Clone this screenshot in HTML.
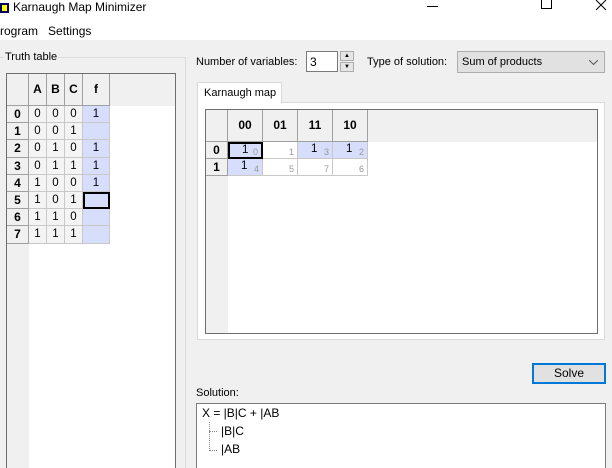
<!DOCTYPE html><html style="width:612px;height:468px;overflow:hidden"><head><style>
*{margin:0;padding:0;box-sizing:border-box}
body{width:612px;height:468px;overflow:hidden;background:#f0f0f0;font-family:"Liberation Sans",sans-serif;font-size:11px;color:#000;position:relative}
.a{position:absolute;white-space:nowrap}
.hc{position:absolute;background:#f0f0f0;border-right:1px solid #a0a0a0;border-bottom:1px solid #a0a0a0;font-weight:bold;text-align:center;font-size:12px}
.c{position:absolute;border-right:1px solid #c8c8c8;border-bottom:1px solid #c8c8c8;text-align:center;font-size:11.5px;background:#f4f4f4}
.f{background:#d6defc}
.w{background:#fff}
.n{position:absolute;right:3px;bottom:1px;font-size:9px;color:#999}
.v{position:absolute;left:13px;top:1px;font-size:11.5px}
</style></head><body>
<div class="a" style="left:0;top:0;width:612px;height:40px;background:#fff"></div>
<div class="a" style="left:0;top:3px;width:9px;height:10px;background:#ff0;border:2px solid #006;"></div>
<div class="a" style="left:13px;top:0;font-size:12px">Karnaugh Map Minimizer</div>
<svg class="a" style="left:420px;top:0" width="192" height="14"><path d="M7 6.5H18" stroke="#000"/><rect x="121.5" y="-1.5" width="10" height="10" fill="none" stroke="#000"/><path d="M176 0L186 10M186 0L176 10" stroke="#000"/></svg>
<div class="a" style="left:0;top:24px;font-size:12px">rogram&nbsp;&nbsp;&nbsp;Settings</div>

<div class="a" style="left:0;top:57px;width:186px;height:411px;border-top:1px solid #dcdcdc;border-right:1px solid #dcdcdc"></div>
<div class="a" style="left:4px;top:51px;background:#f0f0f0;padding:0 1px">Truth table</div>
<div class="a" style="left:6px;top:73px;width:170px;height:395px;border:1px solid #6e6e6e;border-bottom:none;background:#fff"></div>
<div class="a" style="left:7px;top:74px;width:22px;height:394px;background:#f0f0f0"></div>
<div class="a" style="left:29px;top:74px;width:146px;height:32px;background:#f0f0f0"></div>
<div class="hc" style="left:7px;top:74px;width:22px;height:32px"></div>
<div class="hc" style="left:29px;top:74px;width:18px;height:32px;line-height:31px">A</div>
<div class="hc" style="left:47px;top:74px;width:18px;height:32px;line-height:31px">B</div>
<div class="hc" style="left:65px;top:74px;width:18px;height:32px;line-height:31px">C</div>
<div class="hc" style="left:83px;top:74px;width:27px;height:32px;line-height:31px">f</div>
<div id="tt"></div>

<div class="a" style="left:196px;top:56px">Number of variables:</div>
<div class="a" style="left:306px;top:51px;width:32px;height:21px;background:#fff;border:1px solid #7a7a7a;padding:3px 0 0 3px;font-size:12px">3</div>
<div class="a" style="left:340px;top:51px;width:14px;height:10px;border:1px solid #adadad;background:#e5e5e5;font-size:6px;text-align:center;line-height:8px">▲</div>
<div class="a" style="left:340px;top:62px;width:14px;height:10px;border:1px solid #adadad;background:#e5e5e5;font-size:6px;text-align:center;line-height:8px">▼</div>
<div class="a" style="left:367px;top:56px">Type of solution:</div>
<div class="a" style="left:457px;top:51px;width:148px;height:22px;background:#e1e1e1;border:1px solid #adadad;padding:4px 0 0 4px">Sum of products<svg class="a" style="right:6px;top:8px" width="9" height="5"><path d="M0 0L4.5 4.5L9 0" fill="none" stroke="#555"/></svg></div>

<div class="a" style="left:197px;top:102px;width:408px;height:238px;background:#fff;border:1px solid #d9d9d9"></div>
<div class="a" style="left:197px;top:82px;width:85px;height:21px;background:#fff;border:1px solid #d9d9d9;border-bottom:none;padding:4px 0 0 6px">Karnaugh map</div>
<div class="a" style="left:205px;top:109px;width:393px;height:225px;border:1px solid #6e6e6e;background:#fff"></div>
<div class="a" style="left:206px;top:110px;width:391px;height:32px;background:#f0f0f0"></div>
<div class="a" style="left:206px;top:110px;width:22px;height:223px;background:#f0f0f0"></div>
<div class="hc" style="left:206px;top:110px;width:22px;height:32px"></div>
<div class="hc" style="left:228px;top:110px;width:35px;height:32px;line-height:31px">00</div>
<div class="hc" style="left:263px;top:110px;width:35px;height:32px;line-height:31px">01</div>
<div class="hc" style="left:298px;top:110px;width:35px;height:32px;line-height:31px">11</div>
<div class="hc" style="left:333px;top:110px;width:35px;height:32px;line-height:31px">10</div>
<div class="hc" style="left:206px;top:142px;width:22px;height:17px;line-height:16px">0</div>
<div class="hc" style="left:206px;top:159px;width:22px;height:17px;line-height:16px">1</div>
<div class="c f" style="left:228px;top:142px;width:35px;height:17px;border:2px solid #000"><span class="v" style="left:12px;top:0">1</span><span class="n" style="bottom:0">0</span></div>
<div class="c w" style="left:263px;top:142px;width:35px;height:17px"><span class="n">1</span></div>
<div class="c f" style="left:298px;top:142px;width:35px;height:17px"><span class="v">1</span><span class="n">3</span></div>
<div class="c f" style="left:333px;top:142px;width:35px;height:17px"><span class="v">1</span><span class="n">2</span></div>
<div class="c f" style="left:228px;top:159px;width:35px;height:17px"><span class="v">1</span><span class="n">4</span></div>
<div class="c w" style="left:263px;top:159px;width:35px;height:17px"><span class="n">5</span></div>
<div class="c w" style="left:298px;top:159px;width:35px;height:17px"><span class="n">7</span></div>
<div class="c w" style="left:333px;top:159px;width:35px;height:17px"><span class="n">6</span></div>

<div class="a" style="left:532px;top:363px;width:74px;height:21px;background:#e1e1e1;border:2px solid #0078d7;text-align:center;line-height:17px;font-size:12px">Solve</div>
<div class="a" style="left:196px;top:387px">Solution:</div>
<div class="a" style="left:196px;top:403px;width:410px;height:65px;background:#fff;border:1px solid #7a7a7a;border-bottom:none"></div>
<div class="a" style="left:202px;top:406px;font-size:12px">X = |B|C + |AB</div>
<div class="a" style="left:209px;top:422px;height:29px;width:7px;border-left:1px dotted #888"></div>
<div class="a" style="left:209px;top:431px;width:8px;border-top:1px dotted #888"></div>
<div class="a" style="left:209px;top:450px;width:8px;border-top:1px dotted #888"></div>
<div class="a" style="left:221px;top:424px;font-size:12px">|B|C</div>
<div class="a" style="left:221px;top:442px;font-size:12px">|AB</div>

<script>
var r=[["0","0","0","1"],["0","0","1",""],["0","1","0","1"],["0","1","1","1"],["1","0","0","1"],["1","0","1",""],["1","1","0",""],["1","1","1",""]],h="";
for(var i=0;i<8;i++){var t=106+i*17.2;
h+='<div class="hc" style="left:7px;top:'+t+'px;width:22px;height:17.2px;line-height:16px">'+i+'</div>';
var xs=[29,47,65];for(var j=0;j<3;j++)h+='<div class="c" style="left:'+xs[j]+'px;top:'+t+'px;width:18px;height:17.2px;line-height:16px">'+r[i][j]+'</div>';
h+='<div class="c f" style="left:83px;top:'+t+'px;width:27px;height:17.2px;line-height:'+(i==5?14:16)+'px;'+(i==5?'border:2px solid #000':'')+'">'+r[i][3]+'</div>';}
document.getElementById('tt').innerHTML=h;
</script>
</body></html>
